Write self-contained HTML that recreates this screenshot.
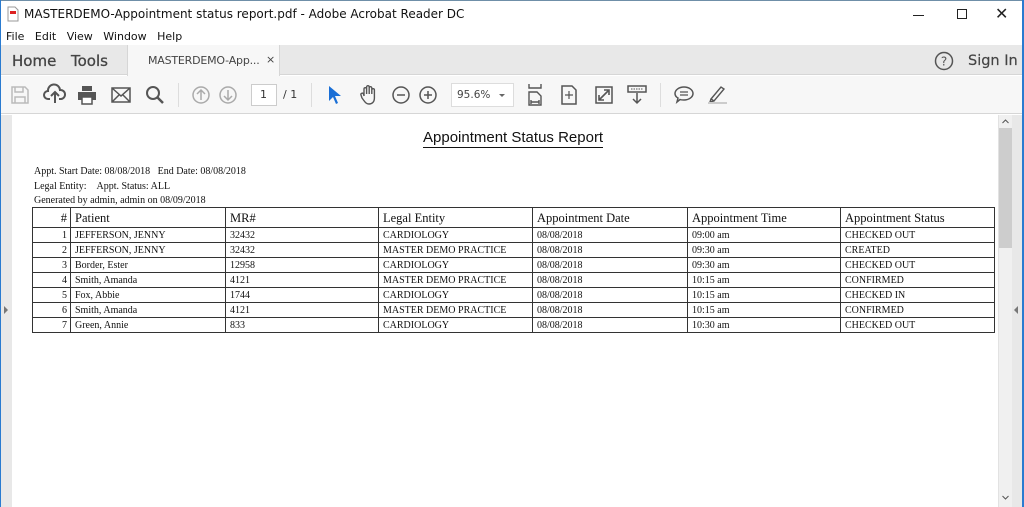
<!DOCTYPE html>
<html><head><meta charset="utf-8"><style>
*{margin:0;padding:0;box-sizing:border-box}
body{width:1024px;height:507px;overflow:hidden;background:#fff;font-family:"Liberation Sans",sans-serif;position:relative}
.a{position:absolute}
.ui{font-family:"DejaVu Sans","Liberation Sans",sans-serif}
svg{position:absolute;overflow:visible}
table{position:absolute;left:32px;top:207px;width:963px;border-collapse:collapse;font-family:"Liberation Serif",serif;color:#111}
td{border:1px solid #333;font-size:10px;height:15px;padding:0 4px;line-height:13px;white-space:nowrap}
tr.h td{font-size:12.5px;height:20px;line-height:18px}
td.n{text-align:right;padding-right:3px}
.meta{font-family:"Liberation Serif",serif;font-size:10px;color:#111;left:34px}
</style></head><body>
<div class="a" style="left:0;top:0;width:1024px;height:1px;background:#6f8fa8"></div>
<div class="a" style="left:0;top:0;width:1px;height:507px;background:#2a7bd0"></div>
<div class="a" style="right:0;top:0;width:2px;height:507px;background:#2a7bd0"></div>
<!-- title -->
<svg style="left:7px;top:7px" width="12" height="14"><path d="M1 0H8L11 3V14H1Z" fill="#fff" stroke="#999"/><path d="M3 4H9V7H3Z" fill="#d22"/></svg>
<div class="a ui" style="left:24px;top:7px;font-size:12px;color:#111">MASTERDEMO-Appointment status report.pdf - Adobe Acrobat Reader DC</div>
<div class="a" style="left:913px;top:15px;width:11px;height:1px;background:#222"></div>
<div class="a" style="left:957px;top:9px;width:10px;height:10px;border:1px solid #222"></div>
<div class="a ui" style="left:995px;top:4px;font-size:16px;color:#222">✕</div>
<!-- menu -->
<div class="a ui" style="left:6px;top:30px;font-size:11px;color:#111">File&nbsp;&nbsp;&nbsp;Edit&nbsp;&nbsp;&nbsp;View&nbsp;&nbsp;&nbsp;Window&nbsp;&nbsp;&nbsp;Help</div>
<!-- tab bar -->
<div class="a" style="left:1px;top:45px;width:1021px;height:30px;background:#e8e8e8;border-bottom:1px solid #d6d6d6"></div>
<div class="a" style="left:127px;top:45px;width:153px;height:31px;background:#f7f7f7;border-left:1px solid #d6d6d6;border-right:1px solid #d6d6d6"></div>
<div class="a ui" style="left:12px;top:52px;font-size:15px;color:#444;-webkit-text-stroke:0.3px #444">Home</div>
<div class="a ui" style="left:71px;top:52px;font-size:15px;color:#444;-webkit-text-stroke:0.3px #444">Tools</div>
<div class="a ui" style="left:148px;top:54px;font-size:11px;color:#444;letter-spacing:-0.2px">MASTERDEMO-App...</div>
<div class="a ui" style="left:266px;top:53px;font-size:11px;color:#444">×</div>
<svg style="left:934px;top:51px" width="20" height="20"><circle cx="10" cy="10" r="8.5" fill="none" stroke="#555" stroke-width="1.5"/><text x="10" y="14.5" font-size="12" text-anchor="middle" fill="#555" font-family="DejaVu Sans">?</text></svg>
<div class="a ui" style="left:968px;top:53px;font-size:14.5px;color:#444;-webkit-text-stroke:0.2px #444">Sign In</div>
<!-- toolbar -->
<div class="a" style="left:1px;top:76px;width:1021px;height:38px;background:#f7f7f7;border-bottom:1px solid #d6d6d6"></div>
<svg style="left:11px;top:86px" width="18" height="18"><path d="M1 1H14L17 4V17H1Z M4 1V6H12V1 M4 17V11H14V17" fill="none" stroke="#bbb" stroke-width="1.5"/></svg>
<svg style="left:44px;top:85px" width="22" height="20"><path d="M6 14H4A4 4 0 0 1 4 6 A6 6 0 0 1 16 5 A4.5 4.5 0 0 1 17 14H15 M11 18V8 M7 11L11 7L15 11" fill="none" stroke="#555" stroke-width="2"/></svg>
<svg style="left:77px;top:85px" width="20" height="20"><path d="M5 1H15V6H5Z" fill="#555"/><path d="M1 7H19V15H1Z" fill="#555"/><path d="M5 12H15V19H5Z" fill="#fff" stroke="#555" stroke-width="1.5"/></svg>
<svg style="left:111px;top:87px" width="20" height="16"><path d="M1 1H19V15H1Z M1 1L10 9L19 1 M1 15L8 8 M19 15L12 8" fill="none" stroke="#555" stroke-width="1.5"/></svg>
<svg style="left:145px;top:85px" width="20" height="20"><circle cx="8" cy="8" r="6" fill="none" stroke="#555" stroke-width="2"/><path d="M12 12L18 18" stroke="#555" stroke-width="2.5"/></svg>
<div class="a" style="left:178px;top:83px;width:1px;height:24px;background:#ddd"></div>
<svg style="left:192px;top:86px" width="18" height="18"><circle cx="9" cy="9" r="8" fill="none" stroke="#aaa" stroke-width="1.5"/><path d="M9 14V4 M5 8L9 4L13 8" fill="none" stroke="#aaa" stroke-width="1.5"/></svg>
<svg style="left:219px;top:86px" width="18" height="18"><circle cx="9" cy="9" r="8" fill="none" stroke="#aaa" stroke-width="1.5"/><path d="M9 4V14 M5 10L9 14L13 10" fill="none" stroke="#aaa" stroke-width="1.5"/></svg>
<div class="a" style="left:251px;top:84px;width:26px;height:22px;background:#fff;border:1px solid #ccc"></div>
<div class="a ui" style="left:260px;top:88px;font-size:11px;color:#333">1</div>
<div class="a ui" style="left:283px;top:88px;font-size:11px;color:#333">/ 1</div>
<div class="a" style="left:311px;top:83px;width:1px;height:24px;background:#ddd"></div>
<svg style="left:328px;top:86px" width="14" height="18"><path d="M1 0V15L5 11L8 18L10 17L7 10H13Z" fill="#1a6fd6"/></svg>
<svg style="left:359px;top:84px" width="20" height="22"><path d="M5 12V5A1.3 1.3 0 0 1 7.6 5V10 M7.6 10V3A1.3 1.3 0 0 1 10.2 3V10 M10.2 10V4A1.3 1.3 0 0 1 12.8 4V10 M12.8 10V6A1.3 1.3 0 0 1 15.4 6V14C15.4 18 13 20 10 20C7 20 6 18 3 14L2 11A1.2 1.2 0 0 1 4.5 10L5 12" fill="none" stroke="#555" stroke-width="1.4"/></svg>
<svg style="left:392px;top:86px" width="18" height="18"><circle cx="9" cy="9" r="8" fill="none" stroke="#555" stroke-width="1.5"/><path d="M5 9H13" stroke="#555" stroke-width="1.5"/></svg>
<svg style="left:419px;top:86px" width="18" height="18"><circle cx="9" cy="9" r="8" fill="none" stroke="#555" stroke-width="1.5"/><path d="M5 9H13M9 5V13" stroke="#555" stroke-width="1.5"/></svg>
<div class="a" style="left:451px;top:83px;width:63px;height:24px;background:#fff;border:1px solid #ddd"></div>
<div class="a ui" style="left:457px;top:89px;font-size:10.5px;color:#444">95.6%</div>
<div class="a" style="left:499px;top:94px;width:0;height:0;border-left:3px solid transparent;border-right:3px solid transparent;border-top:3px solid #666"></div>
<svg style="left:527px;top:84px" width="18" height="22"><path d="M2 0V4H14V0 M2 21V8H10L14 12V21Z M4 18H12 M4 16V20 M12 16V20" fill="none" stroke="#555" stroke-width="1.4"/></svg>
<svg style="left:561px;top:85px" width="16" height="20"><path d="M1 1H11L15 5V19H1Z" fill="none" stroke="#555" stroke-width="1.5"/><path d="M8 6V14M4 10H12" stroke="#555" stroke-width="1.2"/></svg>
<svg style="left:595px;top:86px" width="18" height="18"><rect x="1" y="1" width="16" height="16" fill="none" stroke="#555" stroke-width="1.5"/><path d="M4 14L14 4M9 4H14V9M4 9V14H9" fill="none" stroke="#555" stroke-width="1.6"/></svg>
<svg style="left:627px;top:85px" width="20" height="20"><rect x="1" y="1" width="18" height="6" fill="none" stroke="#555" stroke-width="1.5"/><path d="M4 4H16" stroke="#555" stroke-dasharray="1.5 1"/><path d="M10 8V18M6 14L10 18L14 14" fill="none" stroke="#555" stroke-width="1.5"/></svg>
<div class="a" style="left:660px;top:83px;width:1px;height:24px;background:#ddd"></div>
<svg style="left:674px;top:86px" width="20" height="18"><path d="M10 1C15 1 19 4 19 7.5S15 14 10 14C8 14 7 14 6 13.5L3 16L4 12C2 11 1 9.5 1 7.5C1 4 5 1 10 1Z" fill="none" stroke="#555" stroke-width="1.5"/><path d="M6 6H14M6 9H14" stroke="#555" stroke-width="1.2"/></svg>
<svg style="left:707px;top:84px" width="22" height="20"><path d="M4 15L14 3L17 5L7 17Z M4 15L3 18L7 17" fill="none" stroke="#555" stroke-width="1.4"/><path d="M1 19H20" stroke="#ccc" stroke-width="2"/></svg>
<!-- doc area -->
<div class="a" style="left:1px;top:115px;width:11px;height:392px;background:#e8e8e8"></div>
<div class="a" style="left:4px;top:306px;width:0;height:0;border-top:4px solid transparent;border-bottom:4px solid transparent;border-left:4px solid #777"></div>
<div class="a" style="left:998px;top:115px;width:14px;height:392px;background:#f0f0f0;border-left:1px solid #e2e2e2"></div>
<div class="a" style="left:999px;top:128px;width:13px;height:120px;background:#cdcdcd"></div>
<svg style="left:1002px;top:119px" width="7" height="5"><path d="M0.5 4L3.5 1L6.5 4" fill="none" stroke="#555"/></svg>
<svg style="left:1002px;top:495px" width="7" height="5"><path d="M0.5 1L3.5 4L6.5 1" fill="none" stroke="#555"/></svg>
<div class="a" style="left:1012px;top:115px;width:10px;height:392px;background:#e8e8e8"></div>
<div class="a" style="left:1014px;top:306px;width:0;height:0;border-top:4px solid transparent;border-bottom:4px solid transparent;border-right:4px solid #777"></div>
<!-- page -->
<div class="a" style="left:423px;top:128px;font-size:15px;color:#111;border-bottom:1px solid #111;line-height:19px">Appointment Status Report</div>
<div class="a meta" style="top:166px">Appt. Start Date: 08/08/2018&nbsp;&nbsp;&nbsp;End Date: 08/08/2018</div>
<div class="a meta" style="top:181px">Legal Entity:&nbsp;&nbsp;&nbsp;&nbsp;Appt. Status: ALL</div>
<div class="a meta" style="top:195px">Generated by admin, admin on 08/09/2018</div>
<table>
<colgroup><col style="width:38px"><col style="width:155px"><col style="width:153px"><col style="width:154px"><col style="width:155px"><col style="width:153px"><col></colgroup>
<tr class="h"><td class="n">#</td><td>Patient</td><td>MR#</td><td>Legal Entity</td><td>Appointment Date</td><td>Appointment Time</td><td>Appointment Status</td></tr>
<tr><td class="n">1</td><td>JEFFERSON, JENNY</td><td>32432</td><td>CARDIOLOGY</td><td>08/08/2018</td><td>09:00 am</td><td>CHECKED OUT</td></tr>
<tr><td class="n">2</td><td>JEFFERSON, JENNY</td><td>32432</td><td>MASTER DEMO PRACTICE</td><td>08/08/2018</td><td>09:30 am</td><td>CREATED</td></tr>
<tr><td class="n">3</td><td>Border, Ester</td><td>12958</td><td>CARDIOLOGY</td><td>08/08/2018</td><td>09:30 am</td><td>CHECKED OUT</td></tr>
<tr><td class="n">4</td><td>Smith, Amanda</td><td>4121</td><td>MASTER DEMO PRACTICE</td><td>08/08/2018</td><td>10:15 am</td><td>CONFIRMED</td></tr>
<tr><td class="n">5</td><td>Fox, Abbie</td><td>1744</td><td>CARDIOLOGY</td><td>08/08/2018</td><td>10:15 am</td><td>CHECKED IN</td></tr>
<tr><td class="n">6</td><td>Smith, Amanda</td><td>4121</td><td>MASTER DEMO PRACTICE</td><td>08/08/2018</td><td>10:15 am</td><td>CONFIRMED</td></tr>
<tr><td class="n">7</td><td>Green, Annie</td><td>833</td><td>CARDIOLOGY</td><td>08/08/2018</td><td>10:30 am</td><td>CHECKED OUT</td></tr>
</table>
</body></html>
